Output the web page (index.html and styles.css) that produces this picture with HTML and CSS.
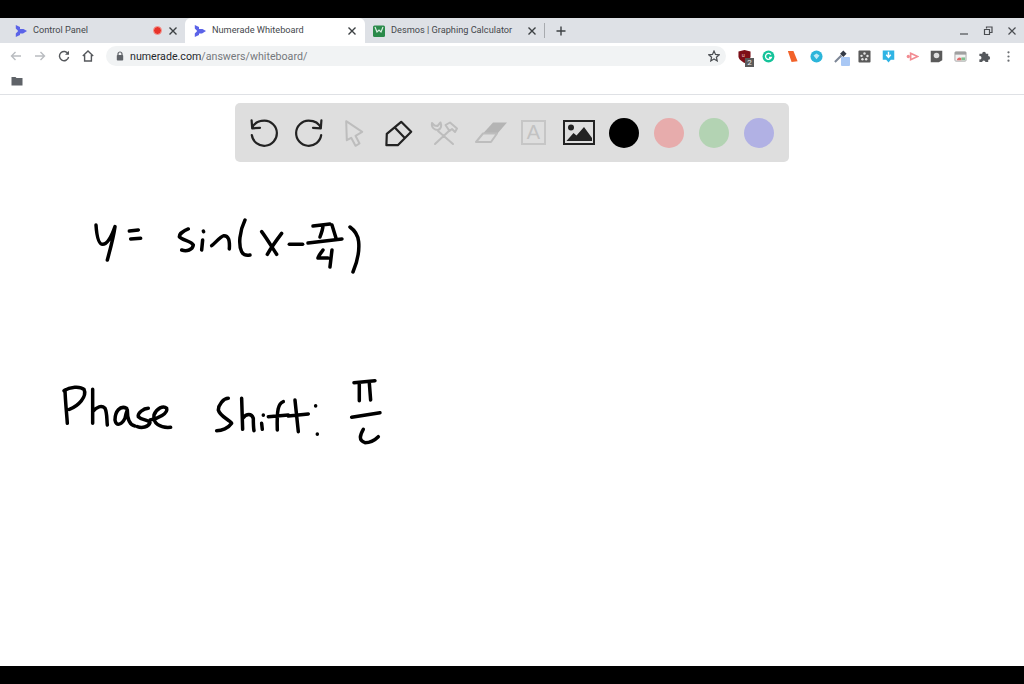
FILE: index.html
```html
<!DOCTYPE html>
<html lang="en">
<head>
<meta charset="utf-8">
<title>Numerade Whiteboard</title>
<link rel="stylesheet" href="styles.css">
</head>
<body>
<div class="screen">
  <div class="letterbox"></div>
  <header class="tabstrip">
    <div class="tab tab-first">
      <svg class="fav" viewBox="0 0 12 12"><path class="fav-num" d="M0.8 0 L5 2 L5 4 L8.5 4 L12 6 L8 8.5 L5 8.5 L5 10 L0.8 12 L0.8 8.5 L3.2 6 L0.8 3.5Z"/></svg>
      <span class="tab-title">Control Panel</span>
      <span class="rec"></span>
      <svg class="tab-close" viewBox="0 0 10 10"><path d="M1.5 1.5 L8.5 8.5 M8.5 1.5 L1.5 8.5"/></svg>
    </div>
    <div class="tab tab-active">
      <svg class="fav" viewBox="0 0 12 12"><path class="fav-num" d="M0.8 0 L5 2 L5 4 L8.5 4 L12 6 L8 8.5 L5 8.5 L5 10 L0.8 12 L0.8 8.5 L3.2 6 L0.8 3.5Z"/></svg>
      <span class="tab-title">Numerade Whiteboard</span>
      <svg class="tab-close" viewBox="0 0 10 10"><path d="M1.5 1.5 L8.5 8.5 M8.5 1.5 L1.5 8.5"/></svg>
    </div>
    <div class="tab tab-last">
      <svg class="fav" viewBox="0 0 12 12"><rect class="fav-des" x="0" y="0.5" width="12" height="11.5" rx="1.5"/><path class="fav-des-line" d="M2 2 L4 7 L6 5 L8 7 L10 2"/></svg>
      <span class="tab-title">Desmos | Graphing Calculator</span>
      <svg class="tab-close" viewBox="0 0 10 10"><path d="M1.5 1.5 L8.5 8.5 M8.5 1.5 L1.5 8.5"/></svg>
    </div>
    <span class="tab-sep"></span>
    <svg class="new-tab" viewBox="0 0 10 10"><path d="M5 0.5 V9.5 M0.5 5 H9.5"/></svg>
    <div class="win-controls">
      <svg class="win-icon" viewBox="0 0 10 10"><path d="M1 8 H9"/></svg>
      <svg class="win-icon" viewBox="0 0 10 10"><path d="M3.5 2.5 V1 H9 V6.5 H7 M1.5 3.5 H6.5 V8.5 H1.5Z"/></svg>
      <svg class="win-icon" viewBox="0 0 10 10"><path d="M1.5 1.5 L8.5 8.5 M8.5 1.5 L1.5 8.5"/></svg>
    </div>
  </header>
  <nav class="navbar">
    <svg class="nav-btn nav-off" viewBox="0 0 12 12"><path d="M11 6 H1.5 M5.5 2 L1.5 6 L5.5 10"/></svg>
    <svg class="nav-btn nav-off" viewBox="0 0 12 12"><path d="M1 6 H10.5 M6.5 2 L10.5 6 L6.5 10"/></svg>
    <svg class="nav-btn" viewBox="0 0 12 12"><path d="M10.2 4 A4.6 4.6 0 1 0 10.6 7"/><path class="solid" d="M11 0.8 V4.8 H7Z"/></svg>
    <svg class="nav-btn" viewBox="0 0 12 12"><path d="M0.8 6 L6 1 L11.2 6 M2.6 5 V11 H9.4 V5"/></svg>
    <div class="omnibox">
      <svg class="lock" viewBox="0 0 8 10"><path d="M2 4.5 V3 A2 2 0 0 1 6 3 V4.5" class="lock-arc"/><rect x="0.8" y="4" width="6.4" height="5.5" rx="0.8"/></svg>
      <span class="url"><span class="url-host">numerade.com</span>/answers/whiteboard/</span>
      <svg class="star" viewBox="0 0 12 12"><path d="M6 1 L7.5 4.4 L11.2 4.8 L8.4 7.2 L9.2 10.9 L6 9 L2.8 10.9 L3.6 7.2 L0.8 4.8 L4.5 4.4Z"/></svg>
    </div>
    <div class="extensions">
      <span class="ext"><svg viewBox="0 0 14 14"><path class="e-ublock" d="M0.5 1.5 L7 0 L13.5 1.5 V7 C13.5 10 9.5 12.5 7 14 C4.5 12.5 0.5 10 0.5 7Z"/><text class="e-ublock-u" x="4" y="7.5">u</text></svg><span class="badge">2</span></span>
      <span class="ext"><svg viewBox="0 0 14 14"><circle class="e-gram" cx="7" cy="7" r="6.4"/><path class="e-gram-g" d="M9.6 5 A3.2 3.2 0 1 0 10 8 H7.5"/></svg></span>
      <span class="ext"><svg viewBox="0 0 14 14"><path class="e-orange" d="M2 1 H8 L12.5 12 L6 13 Z"/></svg></span>
      <span class="ext"><svg viewBox="0 0 14 14"><circle class="e-cyan" cx="7" cy="7" r="6.5"/><path class="e-cyan-in" d="M3.8 6 L7 3.8 L10.2 6 L7 10Z"/></svg></span>
      <span class="ext"><svg class="e-drop-svg" viewBox="0 0 14 14"><path class="e-drop" d="M1 13 L8 6"/><path class="e-drop-top" d="M6.5 4 L10 0.5 L13.5 4 L10 7.5Z"/></svg><span class="swatch"></span></span>
      <span class="ext"><svg viewBox="0 0 14 14"><rect class="e-dark" x="0.5" y="0.5" width="13" height="13" rx="1"/><circle class="e-dots" cx="7" cy="3.8" r="1.3"/><circle class="e-dots" cx="10.2" cy="6.5" r="1.3"/><circle class="e-dots" cx="8.8" cy="10" r="1.3"/><circle class="e-dots" cx="4.8" cy="10" r="1.3"/><circle class="e-dots" cx="3.8" cy="6.3" r="1.3"/></svg></span>
      <span class="ext"><svg viewBox="0 0 14 14"><path class="e-blue" d="M0.8 0.5 H13.2 V10.5 H9.5 L7 13.5 L4.5 10.5 H0.8Z"/><path class="e-blue-in" d="M7 2 V7 M4.6 5.2 L7 8 L9.4 5.2"/></svg></span>
      <span class="ext"><svg viewBox="0 0 14 14"><path class="e-pink" d="M5 3.5 L12.5 7 L5 10.5 Z"/><circle class="e-pink-dot" cx="2.5" cy="7" r="1.8"/></svg></span>
      <span class="ext"><svg viewBox="0 0 14 14"><path class="e-dark" d="M0.8 0.8 H13.2 V11 L9.5 13.2 H0.8Z"/><circle class="e-bulb" cx="7" cy="6" r="3"/></svg></span>
      <span class="ext"><svg viewBox="0 0 14 14"><rect class="e-frame" x="1" y="2" width="12" height="10" rx="1"/><path class="e-bar" d="M1 2 H13 V5 H1Z"/><path class="e-red" d="M3 11 A3 3 0 0 1 8 9 L8 11Z"/><path class="e-grn" d="M8 11 L8 8 L12 8 L12 11Z"/></svg></span>
      <span class="ext"><svg viewBox="0 0 14 14"><path class="e-puzzle" d="M1.5 4 H4.5 A2 2 0 1 1 8.5 4 H11 V6.5 A2 2 0 1 1 11 10.5 V13 H8 A1.7 1.7 0 1 0 4.5 13 H1.5 V10 A1.8 1.8 0 1 0 1.5 6.5Z"/></svg></span>
      <span class="ext"><svg viewBox="0 0 14 14"><circle class="e-menu" cx="7" cy="2.5" r="1.2"/><circle class="e-menu" cx="7" cy="7" r="1.2"/><circle class="e-menu" cx="7" cy="11.5" r="1.2"/></svg></span>
    </div>
  </nav>
  <div class="bookmarks">
    <svg class="folder" viewBox="0 0 12 10"><path d="M0.5 1 H4.5 L5.5 2 H11.5 V9.5 H0.5Z"/></svg>
  </div>
  <main class="board">
    <div class="tools">
      <span class="tool"><svg class="ico ico-dark" viewBox="0 0 30 30"><path d="M2.6 2.4 L3.2 10.3 L11 9.8 M3.2 10.2 C5 5 10 2.6 15.5 2.6 A12.6 12.6 0 1 1 2.8 17"/></svg></span>
      <span class="tool"><svg class="ico ico-dark" viewBox="0 0 30 30"><g transform="matrix(-1 0 0 1 30 0)"><path d="M2.6 2.4 L3.2 10.3 L11 9.8 M3.2 10.2 C5 5 10 2.6 15.5 2.6 A12.6 12.6 0 1 1 2.8 17"/></g></svg></span>
      <span class="tool"><svg class="ico ico-off" viewBox="0 0 30 30"><path d="M7.2 3.2 L23.2 13.8 L16.5 17.8 L20.5 25.5 L16.5 27.8 L12.2 19.8 L7.8 22.2Z"/></svg></span>
      <span class="tool"><svg class="ico ico-dark ico-pen" viewBox="0 0 30 30"><path d="M17.2 3.8 L27.2 13.8 L13.8 27.2 H2.4 L2.8 15.8Z M11 9.8 L20.8 20"/></svg></span>
      <span class="tool"><svg class="ico ico-off" viewBox="0 0 30 30"><path d="M9 13 L24 26 M21 12 L6 26 M3 5 C2 10 6 12 9 12 C12 11 13 8 11.5 4.5 L8.5 8 L5.5 7.5 L3 5Z M16.5 7 L21 4.5 L28 10.5 L26 14 L23 11 L20.5 13 L16.5 7Z"/></svg></span>
      <span class="tool"><svg class="ico ico-off" viewBox="0 0 30 30"><path class="eraser-top" d="M9 15.5 L19 4.5 H33 L23 16Z"/><path d="M9 15.5 H23 L17 24 H2Z"/></svg></span>
      <span class="tool"><span class="text-tool">A</span></span>
      <span class="tool"><svg class="image-tool" viewBox="0 0 32 25"><rect class="img-frame" x="1" y="1" width="30" height="23"/><circle class="img-fill" cx="8" cy="7.5" r="3"/><path class="img-fill" d="M3.5 21 L10.5 13 L13.5 15.5 L21 7 L29 18 V21Z"/></svg></span>
      <span class="tool"><span class="colour c-black"></span></span>
      <span class="tool"><span class="colour c-red"></span></span>
      <span class="tool"><span class="colour c-green"></span></span>
      <span class="tool"><span class="colour c-blue"></span></span>
    </div>
    <svg class="ink" viewBox="0 0 1024 571" aria-hidden="true">
      <g transform="translate(80 110) scale(.3333)">
        <path d="M48 60 C50 90 55 118 68 118 C85 118 98 85 105 65 C100 100 90 135 82 165"/>
        <path d="M148 78 L175 75 M152 102 L182 100"/>
        <path d="M325 72 C310 78 298 88 298 95 C305 105 335 108 340 120 C338 135 320 140 305 135"/>
        <path d="M368 105 L365 135 M370 78 L371 80"/>
        <path d="M395 122 C405 115 420 95 432 92 C445 92 450 105 448 132"/>
        <path d="M495 45 C478 80 475 120 485 140 C490 150 500 152 510 150"/>
        <path d="M545 80 C560 100 575 125 590 148 M605 85 C590 105 575 125 562 148"/>
        <path d="M628 118 L668 118"/>
        <path d="M699 63 L750 57 M729 63 C728 75 724 85 720 96 M756 60 L768 99"/>
        <path d="M684 114 L786 102"/>
        <path d="M729 135 C722 145 716 152 714 159 L744 159 M756 135 L750 186"/>
        <path d="M810 66 C824 76 834 90 836 110 C839 140 830 175 819 201"/>
      </g>
      <g transform="translate(50 275) scale(.3333)">
        <path d="M45 60 C46 95 50 130 52 160 M42 62 C60 50 90 48 102 58 C112 80 85 108 58 118"/>
        <path d="M128 58 C128 100 128 130 128 160 M128 125 C140 110 155 105 165 115 C172 130 170 150 172 165"/>
        <path d="M230 115 C210 105 195 125 195 150 C198 170 215 165 225 145 C228 130 230 125 232 120 C232 145 238 165 255 168"/>
        <path d="M295 115 C280 115 262 130 265 140 C275 150 295 150 300 158 C295 172 275 175 262 170"/>
        <path d="M300 150 C325 145 355 130 350 115 C340 105 320 115 312 135 C308 160 330 175 362 172"/>
        <path d="M535 85 C520 85 505 105 505 120 C510 140 540 150 545 160 C535 175 515 182 500 182"/>
        <path d="M575 85 L578 178 M578 145 C590 130 605 130 610 145 C610 160 610 170 612 182"/>
        <path d="M635 160 L637 178 M640 135 L640 136"/>
        <path d="M700 95 C685 100 680 120 682 180 M655 140 L715 135"/>
        <path d="M735 90 L745 185 M715 138 L775 132"/>
        <path d="M797 107 L797 108 M802 192 L802 193"/>
        <path d="M912 38 L975 32 M928 42 L928 92 M958 38 L962 90"/>
        <path d="M905 142 L990 128"/>
        <path d="M940 178 C930 195 925 212 945 218 C960 218 975 210 985 200"/>
      </g>
    </svg>
  </main>
  <div class="letterbox"></div>
</div>
</body>
</html>
```
FILE: styles.css
```css
* { box-sizing: border-box; }
html, body { margin: 0; height: 100%; background: #000; overflow: hidden; }
svg { display: block; flex: none; }
.screen { width: 1024px; height: 684px; display: flex; flex-direction: column; font-family: Roboto, "Liberation Sans", sans-serif; background: #fff; }
.letterbox { height: 18px; background: #000; flex: none; }

.tabstrip { height: 25px; flex: none; display: flex; align-items: center; background: #dee1e6; color: #3c4043; }
.tab { height: 25px; display: flex; align-items: center; flex: none; }
.tab-first { width: 185px; padding: 0 7px 0 15px; }
.tab-active { width: 180px; padding: 0 8px 0 9px; background: #fff; border-radius: 6px 6px 0 0; }
.tab-last { width: 176px; margin-left: 3px; padding: 0 7px 0 5px; }
.fav { width: 12px; height: 12px; }
.fav-num { fill: #5b63e8; }
.fav-des { fill: #2a8a4a; }
.fav-des-line { fill: none; stroke: #d8efe0; stroke-width: 1.2; }
.tab-title { flex: 1; margin: -2px 0 0 6px; font-size: 9.2px; line-height: 12px; white-space: nowrap; color: #45484c; }
.rec { width: 9px; height: 9px; border-radius: 50%; background: #e8332a; border: 1.5px solid #f2a09a; margin-right: 6px; }
.tab-close { width: 10px; height: 10px; fill: none; stroke: #3c4043; stroke-width: 1.4; }
.tab-sep { width: 1px; height: 15px; background: #a8abaf; flex: none; }
.new-tab { width: 10px; height: 10px; margin-left: 11px; fill: none; stroke: #3c4043; stroke-width: 1.4; }
.win-controls { margin-left: auto; display: flex; gap: 14px; padding-right: 7px; }
.win-icon { width: 10px; height: 10px; fill: none; stroke: #4a4d51; stroke-width: 1.2; }

.navbar { height: 26px; flex: none; display: flex; align-items: center; background: #fff; padding-left: 10px; }
.nav-btn { width: 12px; height: 12px; margin-right: 12px; fill: none; stroke: #55585c; stroke-width: 1.4; }
.nav-off { stroke: #b9bcc0; }
.solid { fill: #55585c; stroke: none; }
.omnibox { width: 620px; height: 20px; margin-right: 6px; border-radius: 10px; background: #f1f3f4; display: flex; align-items: center; padding: 0 6px 0 10px; flex: none; }
.lock { width: 8px; height: 10px; fill: #5f6368; margin-right: 6px; }
.lock-arc { fill: none; stroke: #5f6368; stroke-width: 1.2; }
.url { flex: 1; font-size: 10.65px; color: #75787c; white-space: nowrap; }
.url-host { color: #25282c; }
.star { width: 12px; height: 12px; fill: none; stroke: #4a4d51; stroke-width: 1.2; }
.extensions { display: flex; }
.ext { width: 24px; height: 24px; display: flex; align-items: center; justify-content: center; position: relative; flex: none; }
.ext svg { width: 13px; height: 13px; }
.badge { position: absolute; right: 2px; bottom: 1px; width: 9px; height: 9px; background: #5a5a5a; color: #eee; font-size: 8px; line-height: 9px; text-align: center; }
.swatch { position: absolute; right: 2px; bottom: 2px; width: 9px; height: 9px; border-radius: 1px; background: #a9c8f5; }
.e-ublock { fill: #7d0f18; }
.e-ublock-u { fill: #f1c6c6; font-size: 6px; font-family: Roboto, sans-serif; }
.e-gram { fill: #15c39a; }
.e-gram-g { fill: none; stroke: #fff; stroke-width: 1.5; }
.e-orange { fill: #f2622a; }
.e-cyan { fill: #2bb5da; }
.e-cyan-in { fill: #bfe9f5; }
.e-drop { fill: none; stroke: #7c8696; stroke-width: 2.2; }
.e-drop-top { fill: #333a45; }
.e-dark { fill: #5a5a5a; }
.e-dots { fill: #e4e4e4; }
.e-blue { fill: #2fb4e4; }
.e-blue-in { fill: none; stroke: #fff; stroke-width: 1.6; }
.e-pink { fill: none; stroke: #f28c92; stroke-width: 1.8; }
.e-pink-dot { fill: #f28c92; }
.e-bulb { fill: #ddd; }
.e-frame { fill: #f2f2f2; stroke: #a8a8a8; stroke-width: 1; }
.e-bar { fill: #a0a0a0; }
.e-red { fill: #e06a6a; }
.e-grn { fill: #7fbf8f; }
.e-puzzle { fill: #55585c; }
.e-menu { fill: #6a6d71; }

.bookmarks { height: 26px; flex: none; display: flex; align-items: center; padding: 0 0 1px 11px; background: #fff; border-bottom: 1px solid #dfe1e5; }
.folder { width: 12px; height: 10px; fill: #5f6368; }

.board { flex: 1; position: relative; background: #fff; padding-top: 8px; display: flex; flex-direction: column; align-items: center; }
.tools { width: 554px; height: 59px; padding: 0 7px 0 6px; background: #dedede; border-radius: 5px; display: flex; align-items: center; flex: none; }
.tool { width: 45px; height: 45px; display: flex; align-items: center; justify-content: center; flex: none; }
.ico { width: 30px; height: 30px; fill: none; overflow: visible; stroke-width: 2.2; stroke-linejoin: round; stroke-linecap: round; }
.ico-dark { stroke: #222; }
.ico-off { stroke: #bdbdbd; stroke-width: 2; }
.eraser-top { fill: #b4b4b4; stroke: none; }
.text-tool { width: 25px; height: 25px; border: 2px solid #c6c6c6; color: #c2c2c2; font: 20px/21px "Liberation Sans", sans-serif; text-align: center; }
.image-tool { width: 32px; height: 25px; }
.img-frame { fill: none; stroke: #222; stroke-width: 2; }
.img-fill { fill: #222; }
.colour { width: 30px; height: 30px; border-radius: 50%; }
.c-black { background: #000; }
.c-red { background: #e7acac; }
.c-green { background: #b3d3b3; }
.c-blue { background: #b1b1e4; }

.ink { position: absolute; left: 0; top: 0; width: 1024px; height: 571px; fill: none; stroke: #000; stroke-width: 10.5; stroke-linecap: round; stroke-linejoin: round; pointer-events: none; }
```
